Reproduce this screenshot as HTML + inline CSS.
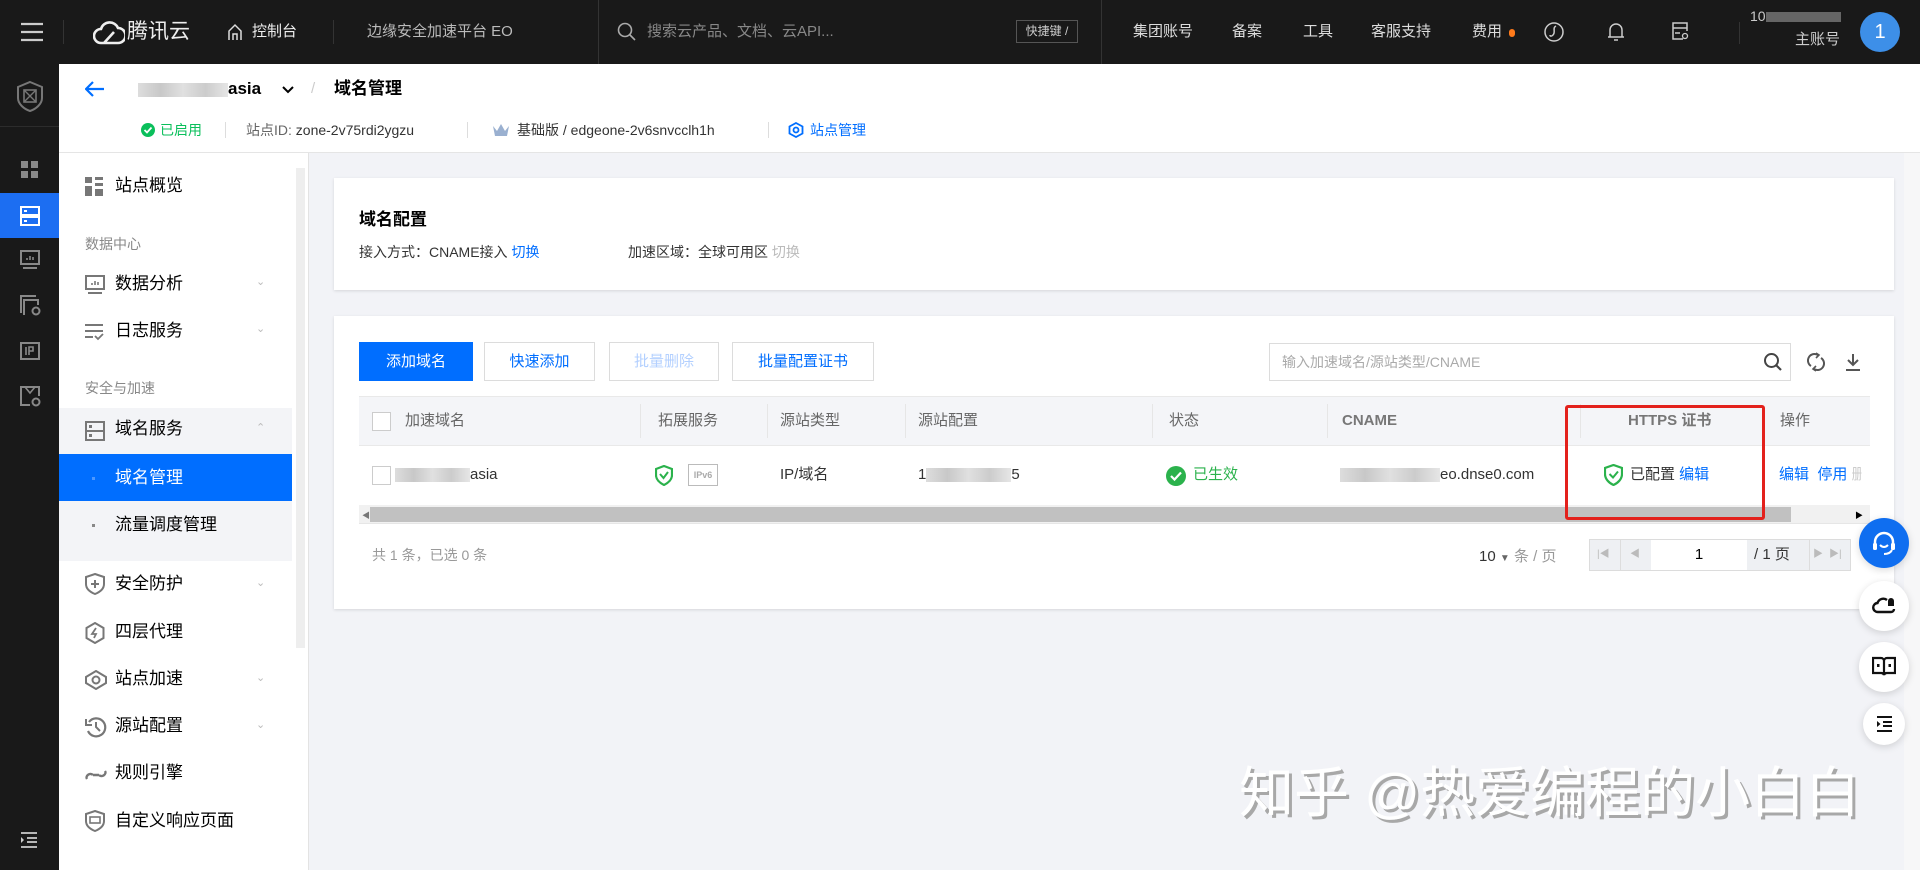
<!DOCTYPE html>
<html><head><meta charset="utf-8">
<style>
*{margin:0;padding:0;box-sizing:border-box}
body{width:1920px;height:870px;overflow:hidden;background:#f2f3f7;font-family:"Liberation Sans","Noto Sans CJK SC",sans-serif;color:#000;position:relative;font-size:15px}
.a{position:absolute;white-space:nowrap}
.top{position:absolute;left:0;top:0;width:1920px;height:64px;background:#191919;color:#ddd}
.top .a{top:0;line-height:64px;font-size:15px;color:#ddd}
.vl{position:absolute;width:1px;background:#333}
.rail{position:absolute;left:0;top:64px;width:59px;height:806px;background:#191919}
.hdr{position:absolute;left:59px;top:64px;width:1861px;height:89px;background:#fff;border-bottom:1px solid #e5e5e5}
.side{position:absolute;left:59px;top:153px;width:250px;height:717px;background:#fff;border-right:1px solid #e3e3e3}
.si{position:absolute;left:56px;font-size:17px;color:#000;line-height:22px}
.sic{position:absolute;left:26px}
.chev{position:absolute;left:197px;font-size:11px;color:#bbb}
.card{position:absolute;left:334px;width:1560px;background:#fff;box-shadow:0 1px 3px rgba(0,0,0,.12)}
.btn{position:absolute;top:342px;height:39px;line-height:37px;border:1px solid #dcdcdc;background:#fff;text-align:center;font-size:15px;color:#006eff}
.th{position:absolute;top:396px;height:50px;line-height:50px;color:#666;font-size:15px}
.cd{position:absolute;top:404px;width:1px;height:34px;background:#e6e6e6}
.td{position:absolute;top:463px;line-height:24px;font-size:15px;color:#333}
.blur{display:inline-block;height:14px;background:linear-gradient(90deg,#ddd,#c8c8c8,#e0e0e0,#ccc,#e6e6e6);vertical-align:middle}
.fb{position:absolute;border-radius:50%;background:#fff;box-shadow:0 2px 8px rgba(0,0,0,.15)}
</style></head><body>

<div class="top">
  <svg class="a" style="left:20px;top:22px" width="24" height="20"><g stroke="#ccc" stroke-width="2.2"><line x1="1" y1="2" x2="23" y2="2"/><line x1="1" y1="10" x2="23" y2="10"/><line x1="1" y1="18" x2="23" y2="18"/></g></svg>
  <div class="vl" style="left:63px;top:20px;height:24px"></div>
  <svg class="a" style="left:93px;top:19px" width="32" height="26" viewBox="0 0 32 26"><path d="M8 24 A7 7 0 0 1 8 10 A9 9 0 0 1 25 9 A7.5 7.5 0 0 1 25 24 Z M11 24 L21 13" fill="none" stroke="#eee" stroke-width="2.6"/></svg>
  <div class="a" style="left:127px;font-size:21px;color:#eee">腾讯云</div>
  <svg class="a" style="left:228px;top:23px" width="14" height="18"><path d="M1 17V8L7 2L13 8V17M5 17V11H9V17" fill="none" stroke="#ddd" stroke-width="1.5"/></svg>
  <div class="a" style="left:252px;font-size:15px;color:#eee">控制台</div>
  <div class="vl" style="left:333px;top:20px;height:24px"></div>
  <div class="a" style="left:367px;color:#bbb">边缘安全加速平台 EO</div>
  <div class="vl" style="left:598px;top:0;height:64px"></div>
  <svg class="a" style="left:617px;top:22px" width="20" height="20"><circle cx="8" cy="8" r="6.5" fill="none" stroke="#aaa" stroke-width="1.6"/><line x1="13" y1="13" x2="18" y2="18" stroke="#aaa" stroke-width="1.6"/></svg>
  <div class="a" style="left:647px;color:#888">搜索云产品、文档、云API...</div>
  <div class="a" style="left:1016px;top:20px;height:23px;line-height:21px;width:62px;border:1px solid #555;font-size:12px;text-align:center;color:#ccc">快捷键 /</div>
  <div class="vl" style="left:1101px;top:0;height:64px"></div>
  <div class="a" style="left:1133px">集团账号</div>
  <div class="a" style="left:1232px">备案</div>
  <div class="a" style="left:1303px">工具</div>
  <div class="a" style="left:1371px">客服支持</div>
  <div class="a" style="left:1472px">费用</div>
  <div class="a" style="left:1509px;top:29px;width:6px;height:8px;border-radius:3px;background:#ff7a1a"></div>
  <svg class="a" style="left:1543px;top:21px" width="22" height="22"><circle cx="11" cy="11" r="9" fill="none" stroke="#ccc" stroke-width="1.5"/><path d="M13 5 C9 7 13 11 10 14 C8 16 7 15 7 14" fill="none" stroke="#ccc" stroke-width="1.5"/></svg>
  <svg class="a" style="left:1607px;top:21px" width="18" height="22"><path d="M3 16V9A6 6 0 0 1 15 9V16H3M1 16H17M7 19H11" fill="none" stroke="#ccc" stroke-width="1.5"/></svg>
  <svg class="a" style="left:1671px;top:21px" width="18" height="22"><path d="M12 18H2V2H16V10M2 7H16M4 12H9" fill="none" stroke="#ccc" stroke-width="1.5"/><circle cx="14" cy="15" r="2.5" fill="none" stroke="#ccc" stroke-width="1.3"/></svg>
  <div class="vl" style="left:1739px;top:22px;height:22px"></div>
  <div class="a" style="left:1750px;top:6px !important;line-height:20px !important;font-size:14px;color:#ccc">10<span class="blur" style="width:75px;height:10px;background:#666"></span></div>
  <div class="a" style="left:1795px;top:30px !important;line-height:20px !important;font-size:15px;color:#ccc">主账号</div>
  <div class="a" style="left:1860px;top:12px !important;width:40px;height:40px;border-radius:50%;background:#3d8fe8;color:#fff;font-size:20px;line-height:40px !important;text-align:center">1</div>
</div>

<div class="rail">
  <svg class="a" style="left:16px;top:16px" width="28" height="32"><path d="M14 2L26 7V18C26 24 20 29 14 31C8 29 2 24 2 18V7Z" fill="none" stroke="#777" stroke-width="2"/><rect x="8" y="10" width="12" height="12" fill="none" stroke="#777" stroke-width="1.6"/><path d="M8 10L20 22M20 10L8 22" stroke="#777" stroke-width="1.4"/></svg>
  <div class="vl" style="left:0;top:62px;width:59px;height:1px;background:#2c2c2c"></div>
  <svg class="a" style="left:21px;top:97px" width="18" height="18" fill="#888"><rect x="0" y="0" width="7" height="7"/><rect x="10" y="0" width="7" height="7"/><rect x="0" y="10" width="7" height="7"/><rect x="10" y="10" width="7" height="7"/></svg>
  <div class="a" style="left:0;top:129px;width:59px;height:45px;background:#1c6ef2"></div>
  <svg class="a" style="left:20px;top:142px" width="20" height="20"><rect x="1" y="1" width="18" height="8" fill="none" stroke="#fff" stroke-width="2"/><rect x="1" y="11" width="18" height="8" fill="none" stroke="#fff" stroke-width="2"/><rect x="4" y="4" width="3" height="2" fill="#fff"/><rect x="4" y="14" width="3" height="2" fill="#fff"/></svg>
  <svg class="a" style="left:20px;top:186px" width="20" height="20"><rect x="1" y="1" width="18" height="13" fill="none" stroke="#888" stroke-width="2"/><line x1="3" y1="18" x2="17" y2="18" stroke="#888" stroke-width="2"/><path d="M7 10V8M10 10V6M13 10V7" stroke="#888" stroke-width="1.6"/></svg>
  <svg class="a" style="left:20px;top:231px" width="22" height="22"><path d="M1 18V1H16M4 20V5H18V10" fill="none" stroke="#888" stroke-width="2"/><circle cx="16" cy="16" r="3.5" fill="none" stroke="#888" stroke-width="2"/></svg>
  <svg class="a" style="left:20px;top:277px" width="20" height="20"><rect x="1" y="2" width="18" height="16" fill="none" stroke="#888" stroke-width="2"/><path d="M6 6V14M9 14V6H13V10H9" fill="none" stroke="#888" stroke-width="1.6"/></svg>
  <svg class="a" style="left:20px;top:322px" width="22" height="22"><path d="M10 19H1V1H19V10" fill="none" stroke="#888" stroke-width="2"/><path d="M5 1L10 7L15 1" fill="none" stroke="#888" stroke-width="1.6"/><circle cx="16" cy="16" r="3.5" fill="none" stroke="#888" stroke-width="2"/></svg>
  <svg class="a" style="left:20px;top:768px" width="18" height="16"><path d="M1 1H17M7 6H17M7 10H17M1 15H17" stroke="#ccc" stroke-width="1.8"/><path d="M1 5L4 8L1 11Z" fill="#ccc"/></svg>
</div>

<div class="hdr">
  <svg class="a" style="left:26px;top:17px" width="20" height="16"><path d="M19 8H2M8 1L1 8L8 15" fill="none" stroke="#006eff" stroke-width="2.2"/></svg>
  <div class="a" style="left:79px;top:14px;font-size:17px;line-height:22px"><span class="blur" style="width:90px;height:14px"></span><b style="font-weight:bold">asia</b></div>
  <svg class="a" style="left:223px;top:22px" width="12" height="8"><path d="M1 1L6 6L11 1" fill="none" stroke="#000" stroke-width="2"/></svg>
  <div class="a" style="left:252px;top:14px;color:#ccc;font-size:15px;line-height:22px">/</div>
  <div class="a" style="left:275px;top:13px;font-size:17px;font-weight:bold;line-height:24px">域名管理</div>
  <svg class="a" style="left:82px;top:59px" width="14" height="14"><circle cx="7" cy="7" r="7" fill="#0abf5b"/><path d="M3.5 7L6 9.5L10.5 4.5" fill="none" stroke="#fff" stroke-width="1.8"/></svg>
  <div class="a" style="left:101px;top:55px;line-height:22px;color:#0abf5b;font-size:14px">已启用</div>
  <div class="a" style="left:166px;top:58px;width:1px;height:16px;background:#ddd"></div>
  <div class="a" style="left:187px;top:55px;line-height:22px;font-size:14px;color:#666">站点ID:&nbsp;<span style="color:#333">zone-2v75rdi2ygzu</span></div>
  <div class="a" style="left:408px;top:58px;width:1px;height:16px;background:#ddd"></div>
  <svg class="a" style="left:433px;top:58px" width="18" height="16"><path d="M1 4L5 9L9 2L13 9L17 4L15 14H3Z" fill="#9ab0d0"/></svg>
  <div class="a" style="left:458px;top:55px;line-height:22px;font-size:14px;color:#333">基础版 / edgeone-2v6snvcclh1h</div>
  <div class="a" style="left:709px;top:58px;width:1px;height:16px;background:#ddd"></div>
  <svg class="a" style="left:729px;top:58px" width="16" height="16"><path d="M8 1L14.5 4.5V11.5L8 15L1.5 11.5V4.5Z" fill="none" stroke="#006eff" stroke-width="1.8"/><circle cx="8" cy="8" r="2.5" fill="none" stroke="#006eff" stroke-width="1.8"/></svg>
  <div class="a" style="left:751px;top:55px;line-height:22px;font-size:14px;color:#006eff">站点管理</div>
</div>

<div class="side">
  <div class="a" style="left:237px;top:15px;width:9px;height:480px;background:#eeeeee"></div>
  <svg class="sic" style="top:24px" width="20" height="20" fill="#777"><rect x="0" y="0" width="7" height="6"/><rect x="0" y="9" width="7" height="10"/><rect x="10" y="0" width="8" height="3"/><rect x="10" y="6" width="8" height="3"/><rect x="10" y="12" width="8" height="7"/></svg>
  <div class="si" style="top:22px">站点概览</div>
  <div class="a" style="left:26px;top:81px;font-size:14px;color:#888">数据中心</div>
  <svg class="sic" style="top:122px" width="20" height="20"><rect x="1" y="1" width="18" height="13" fill="none" stroke="#777" stroke-width="2"/><line x1="3" y1="18" x2="17" y2="18" stroke="#777" stroke-width="2"/><path d="M7 10V8M10 10V6M13 10V7" stroke="#777" stroke-width="1.6"/></svg>
  <div class="si" style="top:120px">数据分析</div><div class="chev" style="top:122px">⌄</div>
  <svg class="sic" style="top:170px" width="20" height="18"><path d="M0 2H18M0 8H18M0 14H8" stroke="#777" stroke-width="2"/><path d="M10 13L13 16L18 11" fill="none" stroke="#777" stroke-width="1.8"/></svg>
  <div class="si" style="top:167px">日志服务</div><div class="chev" style="top:169px">⌄</div>
  <div class="a" style="left:26px;top:225px;font-size:14px;color:#888">安全与加速</div>
  <div class="a" style="left:0;top:255px;width:233px;height:153px;background:#f3f4f7"></div>
  <svg class="sic" style="top:268px" width="20" height="20"><rect x="1" y="1" width="18" height="18" fill="none" stroke="#777" stroke-width="2"/><line x1="1" y1="10" x2="19" y2="10" stroke="#777" stroke-width="2"/><rect x="4" y="4" width="3" height="3" fill="#777"/><rect x="4" y="13" width="3" height="3" fill="#777"/></svg>
  <div class="si" style="top:265px">域名服务</div><div class="chev" style="top:268px">⌃</div>
  <div class="a" style="left:0;top:301px;width:233px;height:47px;background:#006eff"></div>
  <div class="a" style="left:33px;top:324px;width:3px;height:3px;background:#4d98ff"></div>
  <div class="si" style="top:314px;color:#fff">域名管理</div>
  <div class="a" style="left:33px;top:371px;width:3px;height:3px;background:#888"></div>
  <div class="si" style="top:361px">流量调度管理</div>
  <svg class="sic" style="top:420px" width="20" height="22"><path d="M10 1L19 4V11C19 16 15 19 10 21C5 19 1 16 1 11V4Z" fill="none" stroke="#777" stroke-width="2"/><path d="M10 7V15M6 11H14" stroke="#777" stroke-width="2"/></svg>
  <div class="si" style="top:420px">安全防护</div><div class="chev" style="top:423px">⌄</div>
  <svg class="sic" style="top:469px" width="20" height="22"><path d="M10 1L18.5 6V16L10 21L1.5 16V6Z" fill="none" stroke="#777" stroke-width="2"/><path d="M11 6L7 12H11L9 16" fill="none" stroke="#777" stroke-width="1.8"/></svg>
  <div class="si" style="top:468px">四层代理</div>
  <svg class="sic" style="top:517px" width="22" height="20"><path d="M11 1L21 7V13L11 19L1 13V7Z" fill="none" stroke="#777" stroke-width="2"/><circle cx="11" cy="10" r="3.5" fill="none" stroke="#777" stroke-width="2"/></svg>
  <div class="si" style="top:515px">站点加速</div><div class="chev" style="top:518px">⌄</div>
  <svg class="sic" style="top:563px" width="22" height="22"><path d="M4 6A9 9 0 1 1 3 15" fill="none" stroke="#777" stroke-width="2.2"/><path d="M1 3V9H7" fill="none" stroke="#777" stroke-width="2"/><path d="M11 6V11L15 15" fill="none" stroke="#777" stroke-width="2"/></svg>
  <div class="si" style="top:562px">源站配置</div><div class="chev" style="top:565px">⌄</div>
  <svg class="sic" style="top:614px" width="22" height="16"><path d="M2 12C0 9 5 5 8 8M14 8C17 11 22 7 20 4M8 8L14 8" fill="none" stroke="#777" stroke-width="2.4"/></svg>
  <div class="si" style="top:609px">规则引擎</div>
  <svg class="sic" style="top:657px" width="20" height="22"><path d="M10 1L19 4V11C19 16 15 19 10 21C5 19 1 16 1 11V4Z" fill="none" stroke="#777" stroke-width="2"/><rect x="5" y="7" width="10" height="6" fill="none" stroke="#777" stroke-width="1.6"/></svg>
  <div class="si" style="top:657px">自定义响应页面</div>
</div>

<div class="card" style="top:178px;height:112px">
  <div class="a" style="left:25px;top:27px;font-size:17px;font-weight:bold">域名配置</div>
  <div class="a" style="left:25px;top:64px;font-size:14px;color:#333">接入方式：CNAME接入 <span style="color:#006eff">切换</span></div>
  <div class="a" style="left:294px;top:64px;font-size:14px;color:#333">加速区域：全球可用区 <span style="color:#bbb">切换</span></div>
</div>

<div class="card" style="top:316px;height:293px"></div>
<div class="btn" style="left:359px;width:114px;background:#006eff;border-color:#006eff;color:#fff">添加域名</div>
<div class="btn" style="left:484px;width:111px">快速添加</div>
<div class="btn" style="left:609px;width:110px;color:#b3d0ff">批量删除</div>
<div class="btn" style="left:732px;width:142px">批量配置证书</div>
<div class="a" style="left:1269px;top:343px;width:522px;height:38px;border:1px solid #dcdcdc;background:#fff"></div>
<div class="a" style="left:1282px;top:351px;line-height:22px;font-size:14px;color:#aaa">输入加速域名/源站类型/CNAME</div>
<svg class="a" style="left:1763px;top:352px" width="20" height="20"><circle cx="8.5" cy="8.5" r="6.5" fill="none" stroke="#444" stroke-width="2"/><line x1="13.5" y1="13.5" x2="18" y2="18" stroke="#444" stroke-width="2.2"/></svg>
<svg class="a" style="left:1807px;top:352px" width="18" height="20"><path d="M4 14A6.5 6.5 0 0 1 11 3M14 6A6.5 6.5 0 0 1 7 17" fill="none" stroke="#555" stroke-width="2"/><path d="M9 1L12 3L9 6M9 14L6 17L9 19" fill="none" stroke="#555" stroke-width="1.6"/></svg>
<svg class="a" style="left:1845px;top:353px" width="16" height="18"><path d="M8 1V12M3 7L8 12L13 7M1 17H15" fill="none" stroke="#555" stroke-width="2"/></svg>

<div class="a" style="left:359px;top:396px;width:1511px;height:50px;background:#f4f5f8;border-top:1px solid #e9e9e9;border-bottom:1px solid #e9e9e9"></div>
<div class="a" style="left:372px;top:412px;width:19px;height:19px;border:1px solid #ccc;background:#fff"></div>
<div class="th" style="left:405px">加速域名</div>
<div class="cd" style="left:640px"></div><div class="th" style="left:658px">拓展服务</div>
<div class="cd" style="left:767px"></div><div class="th" style="left:780px">源站类型</div>
<div class="cd" style="left:905px"></div><div class="th" style="left:918px">源站配置</div>
<div class="cd" style="left:1152px"></div><div class="th" style="left:1169px">状态</div>
<div class="cd" style="left:1327px"></div><div class="th" style="left:1342px;font-weight:bold;color:#777">CNAME</div>
<div class="cd" style="left:1580px"></div><div class="th" style="left:1628px;font-weight:bold;color:#777">HTTPS 证书</div>
<div class="th" style="left:1780px">操作</div>

<div class="a" style="left:372px;top:466px;width:19px;height:19px;border:1px solid #ccc;background:#fff"></div>
<div class="td" style="left:395px"><span class="blur" style="width:75px"></span>asia</div>
<svg class="a" style="left:655px;top:465px" width="18" height="21"><path d="M9 1L17 4V10C17 15 13 18 9 20C5 18 1 15 1 10V4Z" fill="none" stroke="#2bb24c" stroke-width="2.2"/><path d="M5 9L8.5 13L13 7" fill="none" stroke="#2bb24c" stroke-width="2"/></svg>
<div class="a" style="left:688px;top:464px;width:30px;height:22px;border:1px solid #bbb;font-size:9px;line-height:20px;text-align:center;color:#aaa;font-weight:bold">IPv6</div>
<div class="td" style="left:780px">IP/域名</div>
<div class="td" style="left:918px">1<span class="blur" style="width:85px"></span>5</div>
<svg class="a" style="left:1166px;top:466px" width="20" height="20"><circle cx="10" cy="10" r="10" fill="#2bb24c"/><path d="M5 10L8.5 13.5L15 6.5" fill="none" stroke="#fff" stroke-width="2.2"/></svg>
<div class="td" style="left:1193px;color:#2bb24c">已生效</div>
<div class="td" style="left:1340px"><span class="blur" style="width:100px"></span>eo.dnse0.com</div>
<svg class="a" style="left:1604px;top:464px" width="19" height="22"><path d="M9.5 1L18 4V10C18 15 14 19 9.5 21C5 19 1 15 1 10V4Z" fill="none" stroke="#2bb24c" stroke-width="2.2"/><path d="M5.5 10L9 13.5L14 7.5" fill="none" stroke="#2bb24c" stroke-width="2"/></svg>
<div class="td" style="left:1630px">已配置 <span style="color:#006eff">编辑</span></div>
<div class="td" style="left:1779px;color:#006eff">编辑&nbsp;&nbsp;停用 <span style="color:#ccc">删</span></div>
<div class="a" style="left:1862px;top:446px;width:8px;height:60px;background:#fff"></div>

<div class="a" style="left:359px;top:505px;width:1511px;height:19px;background:#f1f1f1;border-bottom:1px solid #e6e6e6"></div>
<div class="a" style="left:370px;top:507px;width:1421px;height:15px;background:#c1c1c1"></div>
<div class="a" style="left:362px;top:510px;font-size:8px;color:#777">◀</div>
<div class="a" style="left:1855px;top:510px;font-size:8px;color:#000">▶</div>

<div class="a" style="left:372px;top:545px;font-size:14px;color:#999">共 1 条，已选 0 条</div>
<div class="a" style="left:1479px;top:545px;font-size:15px;color:#333">10 <span style="font-size:10px;color:#666">▼</span> <span style="color:#999">条 / 页</span></div>
<div class="a" style="left:1589px;top:539px;width:262px;height:32px;border:1px solid #dcdcdc;background:#eef0f3"></div>
<div class="a" style="left:1620px;top:540px;width:1px;height:30px;background:#ddd"></div>
<div class="a" style="left:1651px;top:540px;width:96px;height:30px;background:#fff;text-align:center;line-height:30px;font-size:15px">1</div>
<div class="a" style="left:1754px;top:540px;line-height:30px;font-size:15px;color:#333">/ 1 页</div>
<div class="a" style="left:1809px;top:540px;width:1px;height:30px;background:#ddd"></div>
<div class="a" style="left:1597px;top:540px;line-height:30px;font-size:10px;color:#bbb">|◀</div>
<div class="a" style="left:1630px;top:540px;line-height:30px;font-size:10px;color:#bbb">◀</div>
<div class="a" style="left:1813px;top:540px;line-height:30px;font-size:10px;color:#bbb">▶</div>
<div class="a" style="left:1829px;top:540px;line-height:30px;font-size:10px;color:#bbb">▶|</div>

<div class="a" style="left:1565px;top:405px;width:200px;height:115px;border:3px solid #e3211c;border-radius:3px"></div>

<div class="a" style="left:1904px;top:153px;width:16px;height:717px;background:#f7f7f8"></div>
<div class="fb" style="left:1859px;top:518px;width:50px;height:50px;background:#0f6ef0"></div>
<svg class="a" style="left:1871px;top:530px" width="26" height="26"><path d="M4 15V12A9 9 0 0 1 22 12V15" fill="none" stroke="#fff" stroke-width="2.5"/><rect x="2" y="13" width="4" height="7" rx="1.5" fill="#fff"/><rect x="20" y="13" width="4" height="7" rx="1.5" fill="#fff"/><path d="M9 15Q13 19 17 15M21 20Q19 24 13 24" fill="none" stroke="#fff" stroke-width="2"/></svg>
<div class="fb" style="left:1859px;top:581px;width:50px;height:50px"></div>
<svg class="a" style="left:1872px;top:593px" width="24" height="22"><path d="M19 19H6A4.5 4.5 0 0 1 5.5 10A6 6 0 0 1 15 7" fill="none" stroke="#111" stroke-width="2.4"/><path d="M16 13V8A3 3 0 0 1 22 8V13Z" fill="#111"/><path d="M19 19A3 3 0 0 0 22 16" fill="none" stroke="#111" stroke-width="2.4"/></svg>
<div class="fb" style="left:1859px;top:642px;width:50px;height:50px"></div>
<svg class="a" style="left:1872px;top:656px" width="24" height="22"><path d="M1 2H9A3 3 0 0 1 12 5V19A3 3 0 0 0 9 17H1ZM23 2H15A3 3 0 0 0 12 5V19A3 3 0 0 1 15 17H23Z" fill="none" stroke="#111" stroke-width="2.2"/><rect x="5" y="8" width="2.5" height="3" fill="#111"/><rect x="16.5" y="8" width="2.5" height="3" fill="#111"/></svg>
<div class="fb" style="left:1863px;top:703px;width:42px;height:42px"></div>
<svg class="a" style="left:1876px;top:716px" width="17" height="16"><path d="M1 1H16M7 6H16M7 10H16M1 15H16" stroke="#111" stroke-width="2"/><path d="M1 5L4.5 8L1 11Z" fill="#111"/></svg>

<div class="a" style="left:1239px;top:760px;font-size:55px;line-height:66px;color:#fff;text-shadow:3px 3px 0 #a8a8a8;font-family:'Liberation Sans','Noto Sans CJK SC',sans-serif">知乎 @热爱编程的小白白</div>
</body></html>
